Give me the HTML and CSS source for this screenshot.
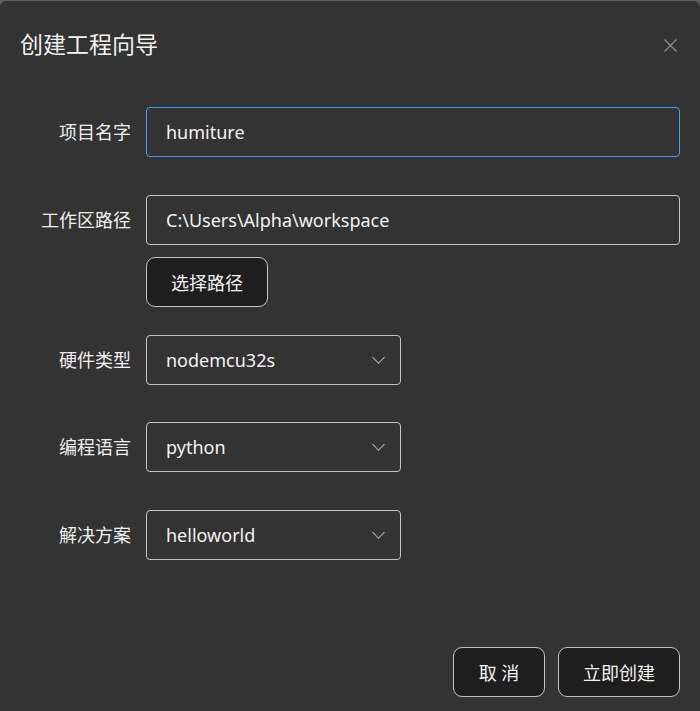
FILE: index.html
```html
<!DOCTYPE html>
<html lang="zh-CN">
<head>
    <meta charset="UTF-8">
    <title>创建工程向导</title>
    <link rel="stylesheet" href="styles.css">
</head>
<body>
<div class="dialog">
    <div class="dialog-header">
        <span class="dialog-title">创建工程向导</span>
        <a class="dialog-close">
            <svg width="13" height="13" viewBox="0 0 13 13"><path d="M0.5 0.5L12.5 12.5M12.5 0.5L0.5 12.5" stroke="#8c8c8c" stroke-width="1.3" fill="none"/></svg>
        </a>
    </div>
    <div class="dialog-body">
        <div class="form-item">
            <label class="form-label">项目名字</label>
            <div class="form-content">
                <div class="input is-focus">humiture</div>
            </div>
        </div>
        <div class="form-item item-path">
            <label class="form-label">工作区路径</label>
            <div class="form-content">
                <div class="input">C:\Users\Alpha\workspace</div>
                <button class="btn btn-path">选择路径</button>
            </div>
        </div>
        <div class="form-item item-board">
            <label class="form-label">硬件类型</label>
            <div class="form-content">
                <div class="select"><span>nodemcu32s</span><i class="arrow"></i></div>
            </div>
        </div>
        <div class="form-item">
            <label class="form-label">编程语言</label>
            <div class="form-content">
                <div class="select"><span>python</span><i class="arrow"></i></div>
            </div>
        </div>
        <div class="form-item">
            <label class="form-label">解决方案</label>
            <div class="form-content">
                <div class="select"><span>helloworld</span><i class="arrow"></i></div>
            </div>
        </div>
    </div>
    <div class="dialog-footer">
        <button class="btn btn-cancel">取 消</button>
        <button class="btn btn-ok">立即创建</button>
    </div>
</div>
</body>
</html>
```

FILE: styles.css
```css
* {
    margin: 0;
    padding: 0;
    box-sizing: border-box;
}
body {
    background: #5e5e5e;
    font-family: "Noto Sans", "Noto Sans CJK SC", sans-serif;
    color: #eeeeee;
}
.dialog {
    margin-top: 1px;
    height: 710px;
    background: #333333;
    border-radius: 6px 6px 0 0;
    display: flex;
    flex-direction: column;
}
.dialog-header {
    display: flex;
    justify-content: space-between;
    align-items: center;
    padding: 25px 23px 0 20px;
    height: 60px;
}
.dialog-title {
    font-size: 23px;
    line-height: 32px;
    color: #f2f2f2;
}
.dialog-close {
    display: flex;
    margin-top: 3px;
}
.dialog-body {
    padding: 46px 20px 0 20px;
}
.form-item {
    display: flex;
    margin-bottom: 38px;
}
.form-item.item-path {
    margin-bottom: 28px;
}
.form-item.item-board {
    margin-bottom: 37px;
}
.form-label {
    width: 126px;
    padding-right: 15px;
    text-align: right;
    font-size: 18px;
    line-height: 50px;
    color: #eeeeee;
    white-space: nowrap;
}
.form-content {
    flex: 1;
    display: flex;
    flex-direction: column;
    align-items: flex-start;
    gap: 12px;
}
.input {
    width: 100%;
    height: 50px;
    line-height: 48px;
    border: 1px solid #c4c4c4;
    border-radius: 4px;
    padding-left: 19px;
    font-size: 18px;
    color: #f2f2f2;
}
.input.is-focus {
    border-color: #409eff;
}
.select {
    width: 255px;
    height: 50px;
    border: 1px solid #c4c4c4;
    border-radius: 4px;
    padding: 0 15px 0 19px;
    display: flex;
    justify-content: space-between;
    align-items: center;
    font-size: 18px;
    color: #f2f2f2;
}
.arrow {
    width: 9px;
    height: 9px;
    border-right: 1.3px solid #b8b8b8;
    border-bottom: 1.3px solid #b8b8b8;
    transform: rotate(45deg);
    margin: -5px 2px 0 0;
}
.btn {
    height: 50px;
    background: #1e1e1e;
    border: 1px solid #c4c4c4;
    color: #f2f2f2;
    font-family: inherit;
    font-size: 18px;
    border-radius: 9px;
    padding: 0 24px;
}
.btn-path {
    width: 122px;
}
.dialog-footer {
    margin-top: auto;
    display: flex;
    justify-content: flex-end;
    gap: 13px;
    padding: 0 20px 14px 0;
}
.btn-cancel {
    width: 92px;
}
.btn-ok {
    width: 122px;
}
```
